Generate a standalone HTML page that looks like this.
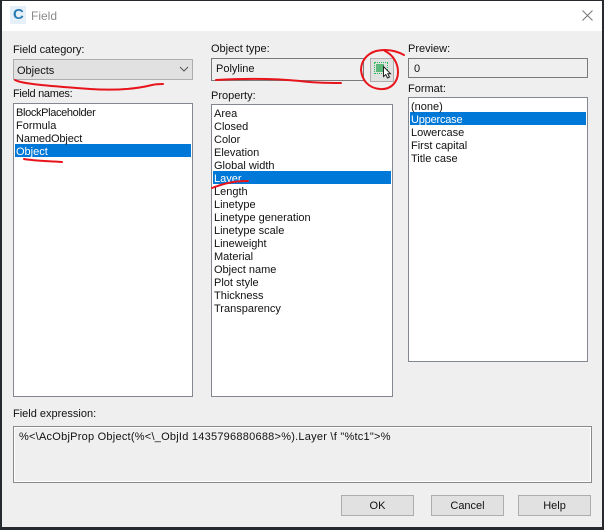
<!DOCTYPE html>
<html><head><meta charset="utf-8"><style>
html,body{margin:0;padding:0;width:604px;height:530px;overflow:hidden;background:#26292e}
body{position:relative;font-family:"Liberation Sans",sans-serif;font-size:11px;color:#111}
div{position:absolute;box-sizing:border-box;white-space:nowrap}
.l{line-height:13px;height:13px;margin-top:1px}
.list{background:#fff;border:1px solid #828790}
.sel{background:#0078d7;height:13px}
.w{color:#fff}
.btn{background:#e1e1e1;border:1px solid #adadad;text-align:center;line-height:21px;height:21px;width:73px;top:495px}
</style></head><body>
<div style="left:2px;top:1px;width:600px;height:526px;background:#efefef"></div>
<div style="left:2px;top:1px;width:600px;height:30px;background:#fff"></div>
<div style="left:10px;top:6px;width:16px;height:18px;background:#e6f0f8"></div>
<div style="left:13px;top:7px;font:bold 15px/16px 'Liberation Sans',sans-serif;color:#2a7db5">C</div>
<div style="left:31px;top:9px;font-size:12px;line-height:14px;color:#8a8a8a">Field</div>
<svg style="position:absolute;left:581px;top:9px" width="13" height="13"><path d="M1.500 1.500L11.500 11.500M11.500 1.500L1.500 11.500" stroke="#777" stroke-width="1" fill="none"/></svg>

<div class="l" style="left:13px;top:43px;letter-spacing:-.05px">Field category:</div>
<div style="left:13px;top:59px;width:180px;height:21px;background:#e1e1e1;border:1px solid #adadad"></div>
<div class="l" style="left:17px;top:64px">Objects</div>
<svg style="position:absolute;left:179px;top:66px" width="10" height="7"><path d="M1 1L5 5L9 1" stroke="#555" fill="none"/></svg>
<div class="l" style="left:13px;top:87px;letter-spacing:-.3px">Field names:</div>
<div class="list" style="left:13px;top:103px;width:180px;height:294px"></div>
<div class="sel" style="left:15px;top:144px;width:176px"></div>
<div class="l" style="left:16px;top:106px;letter-spacing:-.35px">BlockPlaceholder</div>
<div class="l" style="left:16px;top:119px">Formula</div>
<div class="l" style="left:16px;top:132px;letter-spacing:-.1px">NamedObject</div>
<div class="l w" style="left:16px;top:145px">Object</div>

<div class="l" style="left:211px;top:42px">Object type:</div>
<div style="left:211px;top:58px;width:153px;height:23px;background:#efefef;border:1px solid #7a7a7a"></div>
<div class="l" style="left:216px;top:62px">Polyline</div>
<div style="left:370px;top:58px;width:24px;height:24px;background:#e1e1e1;border:1px solid #adadad"></div>
<div style="left:374px;top:62px;width:14px;height:12px;border:1px dotted #1fc050"></div>
<div style="left:376px;top:64px;width:8px;height:8px;background:#5cb87a"></div>
<svg style="position:absolute;left:382px;top:65px" width="10" height="14"><path d="M1.500 1.500V11.500L3.800 9.500L5.500 13L7.500 12L5.800 8.800H8.500Z" fill="#fff" stroke="#222"/></svg>
<div class="l" style="left:211px;top:89px">Property:</div>
<div class="list" style="left:211px;top:104px;width:182px;height:293px"></div>
<div class="sel" style="left:213px;top:171px;width:178px"></div>
<div class="l" style="left:214px;top:107px">Area</div>
<div class="l" style="left:214px;top:120px">Closed</div>
<div class="l" style="left:214px;top:133px">Color</div>
<div class="l" style="left:214px;top:146px">Elevation</div>
<div class="l" style="left:214px;top:159px">Global width</div>
<div class="l w" style="left:214px;top:172px">Layer</div>
<div class="l" style="left:214px;top:185px">Length</div>
<div class="l" style="left:214px;top:198px">Linetype</div>
<div class="l" style="left:214px;top:211px">Linetype generation</div>
<div class="l" style="left:214px;top:224px">Linetype scale</div>
<div class="l" style="left:214px;top:237px">Lineweight</div>
<div class="l" style="left:214px;top:250px">Material</div>
<div class="l" style="left:214px;top:263px">Object name</div>
<div class="l" style="left:214px;top:276px">Plot style</div>
<div class="l" style="left:214px;top:289px">Thickness</div>
<div class="l" style="left:214px;top:302px">Transparency</div>

<div class="l" style="left:408px;top:42px">Preview:</div>
<div style="left:408px;top:58px;width:180px;height:20px;background:#efefef;border:1px solid #7a7a7a"></div>
<div class="l" style="left:414px;top:62px">0</div>
<div class="l" style="left:408px;top:82px">Format:</div>
<div class="list" style="left:408px;top:97px;width:180px;height:265px"></div>
<div class="sel" style="left:410px;top:112px;width:176px"></div>
<div class="l" style="left:411px;top:100px">(none)</div>
<div class="l w" style="left:411px;top:113px;letter-spacing:-.2px">Uppercase</div>
<div class="l" style="left:411px;top:126px">Lowercase</div>
<div class="l" style="left:411px;top:139px">First capital</div>
<div class="l" style="left:411px;top:152px">Title case</div>

<div class="l" style="left:13px;top:407px">Field expression:</div>
<div style="left:13px;top:426px;width:579px;height:57px;background:#efefef;border:1px solid #8a8a8a;box-shadow:inset 1px 1px 0 #fff,inset -1px -1px 0 #fff"></div>
<div class="l" style="left:19px;top:430px;letter-spacing:.24px">%&lt;\AcObjProp Object(%&lt;\_ObjId 1435796880688&gt;%).Layer \f "%tc1"&gt;%</div>

<div class="btn" style="left:341px">OK</div>
<div class="btn" style="left:431px">Cancel</div>
<div class="btn" style="left:518px">Help</div>

<svg style="position:absolute;left:0;top:0" width="604" height="530" fill="none" stroke="#e8141c" stroke-width="2" stroke-linecap="round" stroke-linejoin="round">
<path d="M15 80C22 84 50 86 90 89C120 91 140 88 152 85C156 84 160 84 163 84"/>
<path d="M24 159C35 161 50 161 62 162"/>
<path d="M216 80C250 78 280 79 300 81C315 83 330 83 341 83"/>
<path d="M212 188C225 183 235 181 248 181"/>
<path d="M404 55C395 50 385 49 376 51C366 54 361 62 361 70C362 80 368 88 380 89C391 90 398 82 398 72C398 63 393 55 385 51"/>
</svg>
</body></html>
